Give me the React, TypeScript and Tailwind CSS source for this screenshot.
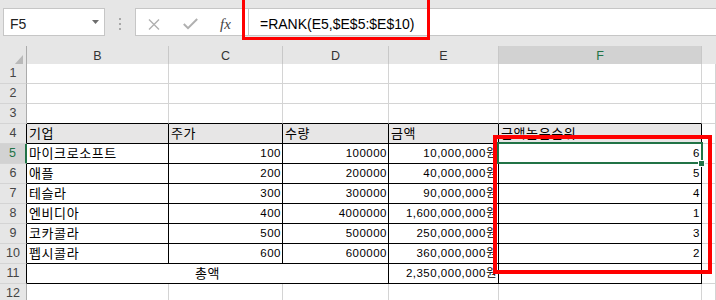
import React from "react";

const rowsData: Record<number, string[]> = {
  4: ["기업", "주가", "수량", "금액", "금액높은순위"],
  5: ["마이크로소프트", "100", "100000", "10,000,000원", "6"],
  6: ["애플", "200", "200000", "40,000,000원", "5"],
  7: ["테슬라", "300", "300000", "90,000,000원", "4"],
  8: ["엔비디아", "400", "4000000", "1,600,000,000원", "1"],
  9: ["코카콜라", "500", "500000", "250,000,000원", "3"],
  10: ["펩시콜라", "600", "600000", "360,000,000원", "2"],
};

const inTable = (r: number) => r >= 4 && r <= 11;

function RowHeader({ r }: { r: number }) {
  const selected = r === 5;
  const right = selected
    ? "border-r-2 border-r-[#217346]"
    : inTable(r)
    ? "border-r border-r-black"
    : "border-r border-r-[#ababab]";
  const bg = selected ? "bg-[#d2d2d2] text-[#217346]" : "bg-[#e6e6e6] text-[#444444]";
  return (
    <div className={`flex items-center justify-center border-b border-b-[#d4d4d4] text-[12.5px] ${right} ${bg}`}>
      {r}
    </div>
  );
}

function Cell({ r, c, text }: { r: number; c: number; text?: string }) {
  const right = inTable(r) && c <= 5 ? "border-r border-r-black" : "border-r border-r-[#d4d4d4]";
  const bottom = r >= 3 && r <= 11 && c <= 5 ? "border-b border-b-black" : "border-b border-b-[#d4d4d4]";
  const bg = r === 4 && c <= 5 ? "bg-[#e7e6e6]" : "bg-white";
  const left = r === 4 || c === 1;
  const align = left
    ? "justify-start pl-[2px] text-[13px] tracking-[0.6px]"
    : "justify-end pr-[1px] text-[11.5px] tracking-[0.5px]";
  return (
    <div className={`flex items-center overflow-hidden whitespace-nowrap text-black ${right} ${bottom} ${bg} ${align}`}>
      {text}
    </div>
  );
}

function BodyRow({ r }: { r: number }) {
  if (r === 11) {
    return (
      <>
        <RowHeader r={r} />
        <div className="col-span-3 flex items-center justify-center border-r border-b border-r-black border-b-black bg-white text-[13px] tracking-[0.6px] text-black">
          총액
        </div>
        <div className="flex items-center justify-end overflow-hidden whitespace-nowrap border-r border-b border-r-black border-b-black bg-white pr-[1px] text-[11.5px] tracking-[0.5px] text-black">
          2,350,000,000원
        </div>
        <Cell r={r} c={5} />
        <Cell r={r} c={6} />
      </>
    );
  }
  const d = rowsData[r];
  return (
    <>
      <RowHeader r={r} />
      {[1, 2, 3, 4, 5, 6].map((c) => (
        <Cell key={c} r={r} c={c} text={d && c <= 5 ? d[c - 1] : undefined} />
      ))}
    </>
  );
}

export default function App() {
  const rows = [1, 2, 3, 4, 5, 6, 7, 8, 9, 10, 11, 12];
  return (
    <div className="relative h-[300px] w-[716px] overflow-hidden bg-white font-['Liberation_Sans','Noto_Sans_CJK_KR',sans-serif]">
      {/* Toolbar / formula bar */}
      <div className="flex h-[46px] bg-[#e6e6e6]">
        <div className="ml-[3px] mt-[8px] flex h-[28px] w-[102px] items-center justify-between border border-[#c6c6c6] bg-white pl-[6px] pr-[5px] pt-[4px] text-[14px] text-[#222222]">
          <span>F5</span>
          <svg width="7" height="4" viewBox="0 0 7 4" className="mb-[4px]">
            <path d="M0 0H7L3.5 4Z" fill="#6d6d6d" />
          </svg>
        </div>
        <div className="mt-[8px] flex h-[28px] w-[30px] flex-col items-center justify-center gap-[3px] pt-[3px]">
          <span className="h-[2px] w-[2px] bg-[#a8a8a8]" />
          <span className="h-[2px] w-[2px] bg-[#a8a8a8]" />
          <span className="h-[2px] w-[2px] bg-[#a8a8a8]" />
        </div>
        <div className="mt-[8px] flex h-[28px] w-[114px] items-center border border-[#c6c6c6] bg-white pt-[4px]">
          <svg width="12" height="11" viewBox="0 0 12 11" className="ml-[12px]">
            <path d="M1 0.5L11 10.5M11 0.5L1 10.5" stroke="#b0b0b0" strokeWidth="1.4" fill="none" />
          </svg>
          <svg width="15" height="12" viewBox="0 0 15 12" className="ml-[23px]">
            <path d="M0.8 6L5 10.2L14.2 1" stroke="#b0b0b0" strokeWidth="2" fill="none" />
          </svg>
          <span className="ml-[22px] font-['Liberation_Serif',serif] text-[15px] italic leading-none text-[#444444]">
            fx
          </span>
        </div>
        <div className="mt-[8px] flex h-[28px] flex-1 items-center border-y border-[#c6c6c6] bg-white pl-[11px] pt-[4px] text-[14px] text-black">
          =RANK(E5,$E$5:$E$10)
        </div>
      </div>

      {/* Column headers */}
      <div className="grid h-[18px] grid-cols-[27px_142px_114px_106px_110px_203px_1fr] bg-[#e6e6e6] text-[12.5px] text-[#333333]">
        <div className="flex items-end justify-end border-r border-b border-r-[#ababab] border-b-[#ababab] pb-[2px] pr-[3px]">
          <svg width="9" height="10" viewBox="0 0 9 10">
            <path d="M9 0V10H0Z" fill="#b9b9b9" />
          </svg>
        </div>
        <div className="flex items-center justify-center border-r border-b border-r-[#c8c8c8] border-b-[#ababab]">B</div>
        <div className="flex items-center justify-center border-r border-b border-r-[#c8c8c8] border-b-[#ababab]">C</div>
        <div className="flex items-center justify-center border-r border-b border-r-[#c8c8c8] border-b-[#ababab]">D</div>
        <div className="flex items-center justify-center border-r border-b border-r-[#c8c8c8] border-b-[#ababab]">E</div>
        <div className="flex items-center justify-center border-r border-b-2 border-r-[#c8c8c8] border-b-[#217346] bg-[#d2d2d2] pt-[1px] text-[#217346]">
          F
        </div>
        <div className="border-b border-b-[#ababab]" />
      </div>

      {/* Sheet body */}
      <div className="grid auto-rows-[20px] grid-cols-[27px_142px_114px_106px_110px_203px_1fr]">
        {rows.map((r) => (
          <BodyRow key={r} r={r} />
        ))}
      </div>

      {/* Selection on F5 */}
      <div className="absolute left-[497px] top-[142px] h-[22px] w-[206px] border-2 border-[#217346]" />
      <div className="absolute left-[698px] top-[160px] h-[7px] w-[7px] border border-white bg-[#217346]" />

      {/* Red annotation boxes */}
      <div className="absolute left-[242px] top-[-3px] h-[43px] w-[188px] border-[3px] border-[#ff0000]" />
      <div className="absolute left-[493px] top-[135px] h-[139px] w-[219px] border-4 border-[#ff0000]" />
    </div>
  );
}
